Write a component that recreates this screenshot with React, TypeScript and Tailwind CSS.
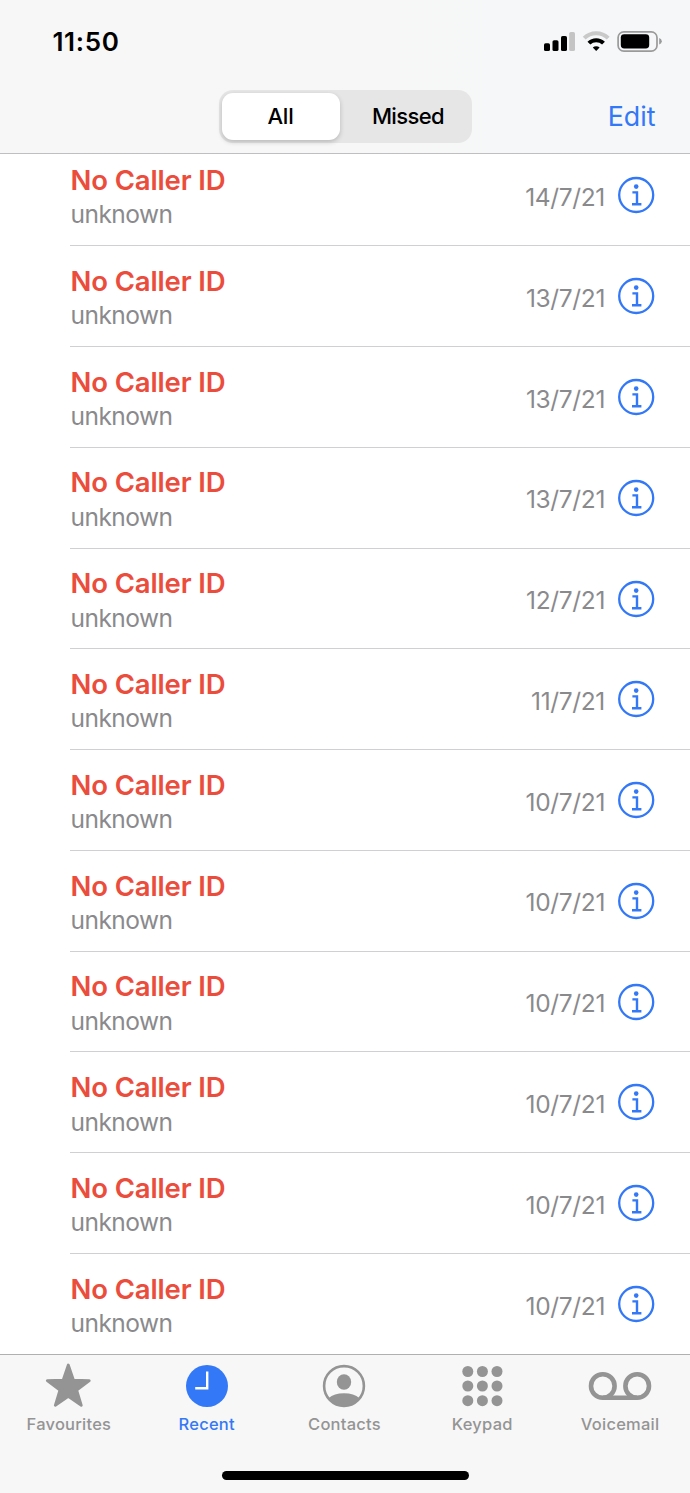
import type { ReactNode } from "react";

const calls = [
  "14/7/21", "13/7/21", "13/7/21", "13/7/21", "12/7/21", "11/7/21",
  "10/7/21", "10/7/21", "10/7/21", "10/7/21", "10/7/21", "10/7/21",
];

function StatusIcons() {
  return (
    <svg width="120" height="24" viewBox="0 0 120 24" className="block">
      <rect x="2" y="13.2" width="6" height="7.8" rx="1.6" fill="#000" />
      <rect x="10.5" y="10.2" width="6" height="10.8" rx="1.6" fill="#000" />
      <rect x="19" y="6" width="6" height="15" rx="1.6" fill="#000" />
      <rect x="27.2" y="2" width="5.8" height="19" rx="1.6" fill="#c4c4c4" />
      <path d="M42.2 8.2 A17 17 0 0 1 66.2 8.2" fill="none" stroke="#c9c9c9" strokeWidth="4" />
      <path d="M46.9 13.2 A10.3 10.3 0 0 1 61.5 13.2" fill="none" stroke="#000" strokeWidth="4" />
      <path d="M54.2 21 L50.8 17.6 A4.8 4.8 0 0 1 57.6 17.6 Z" fill="#000" />
      <rect x="76.1" y="1.8" width="38.9" height="19.4" rx="5.8" fill="none" stroke="#9a9a9a" strokeWidth="1.7" />
      <rect x="78.8" y="4.2" width="28.4" height="14.2" rx="3.4" fill="#000" />
      <path d="M117.2 8 Q119.8 9 119.8 11.3 Q119.8 13.6 117.2 14.6 Z" fill="#9a9a9a" />
    </svg>
  );
}

function InfoIcon() {
  return (
    <svg width="38" height="38" viewBox="0 0 38 38" className="block shrink-0">
      <circle cx="19.2" cy="19" r="17" fill="none" stroke="#3378f6" strokeWidth="2.3" />
      <circle cx="19.2" cy="10.6" r="2.3" fill="#3378f6" />
      <path d="M15.4 16.4H20V28.2M15 28.2H24.4" fill="none" stroke="#3378f6" strokeWidth="2.4" />
    </svg>
  );
}

function CallRow({ date }: { date: string }) {
  return (
    <li className="ml-[70px] flex h-[100.8px] shrink-0 border-b border-[#d0d0d2] pr-[35px] last:border-b-0">
      <div className="flex-1 pt-[17.7px] pl-[0.6px]">
        <div className="text-[27.5px] leading-[34px] font-semibold tracking-[-0.15px] text-[#eb4d3d]">No Caller ID</div>
        <div className="pt-[0.4px] text-[24.5px] leading-[34px] tracking-[-0.55px] text-[#8a8a8d]">unknown</div>
      </div>
      <div className="flex pt-[31px]">
        <span className="mr-[12px] pt-[3.6px] text-[24.5px] leading-[34px] tracking-[-0.35px] text-[#8a8a8d]">{date}</span>
        <InfoIcon />
      </div>
    </li>
  );
}

function Tab({ label, active, children }: { label: string; active?: boolean; children: ReactNode }) {
  return (
    <button
      className={
        "flex w-[138px] flex-col items-center pt-[7px] " + (active ? "text-[#3378f6]" : "text-[#949494]")
      }
    >
      <svg width="68" height="48" viewBox="0 0 68 48" className="block">
        {children}
      </svg>
      <span className="mt-[2.5px] text-[16.5px] leading-[22px] font-medium tracking-[0.24px]">{label}</span>
    </button>
  );
}

export default function App() {
  return (
    <div className="flex h-[1493px] w-[690px] flex-col overflow-hidden bg-white font-['Inter',sans-serif]">
      <header className="h-[154px] shrink-0 border-b border-[#bfbfc1] bg-linear-to-r from-[#f7f7f7] via-[#f7f7f7] to-[#f5f7f9]">
        <div className="flex h-[90px] justify-between pr-[28px] pl-[52.4px]">
          <span className="pt-[25px] text-[26px] leading-[34px] font-semibold tracking-[0.7px]">11:50</span>
          <div className="pt-[30px]">
            <StatusIcons />
          </div>
        </div>
        <div className="grid grid-cols-[1fr_253px_1fr] items-center">
          <span />
          <div className="flex h-[53px] rounded-[14px] bg-[#e6e6e6] p-[3px] text-[22px] font-medium">
            <button className="h-[47px] w-[118px] rounded-[11px] bg-white tracking-[-0.2px] shadow-[0_2px_5px_rgba(0,0,0,0.2)]">All</button>
            <button className="flex-1 pl-[8px] tracking-[-0.6px]">Missed</button>
          </div>
          <button className="pr-[34.5px] text-right text-[26.8px] text-[#3378f6]">Edit</button>
        </div>
      </header>

      <main className="h-[1200px] shrink-0 overflow-hidden">
        <ul className="-mt-[8.7px] flex flex-col">
          {calls.map((date, i) => (
            <CallRow key={i} date={date} />
          ))}
        </ul>
      </main>

      <footer className="flex flex-1 flex-col border-t border-[#b0b0b1] bg-[#f7f7f7]">
        <nav className="flex h-[116px] justify-between pr-px">
          <Tab label="Favourites">
            <path
              d="M33.3 3 L38.5 18.2 L54.3 18.6 L41.7 28.2 L46.3 43.3 L33.3 34.3 L20.3 43.3 L24.9 28.2 L12.3 18.6 L28.1 18.2 Z"
              fill="currentColor"
              stroke="currentColor"
              strokeWidth="2.8"
              strokeLinejoin="round"
            />
          </Tab>
          <Tab label="Recent" active>
            <circle cx="34" cy="24" r="21" fill="currentColor" />
            <path d="M34.2 9.5V26.2H22.2" fill="none" stroke="#fff" strokeWidth="2.4" />
          </Tab>
          <Tab label="Contacts">
            <circle cx="34" cy="24" r="19.9" fill="none" stroke="currentColor" strokeWidth="2.6" />
            <ellipse cx="34" cy="20" rx="7.2" ry="7.8" fill="currentColor" />
            <path d="M18.5 36.2 Q24 31.3 34 31.3 Q44 31.3 49.5 36.2 A19.9 19.9 0 0 1 18.5 36.2Z" fill="currentColor" />
          </Tab>
          <Tab label="Keypad">
            {[9.5, 24, 38.7].map((y) =>
              [19.8, 34.4, 49].map((x) => <circle key={`${x}-${y}`} cx={x} cy={y} r="5.5" fill="currentColor" />)
            )}
          </Tab>
          <Tab label="Voicemail">
            <g fill="none" stroke="currentColor" strokeWidth="4.6">
              <circle cx="16.8" cy="24" r="11.8" />
              <circle cx="51.2" cy="24" r="11.8" />
              <path d="M16.8 35.8H51.2" />
            </g>
          </Tab>
        </nav>
        <div className="mx-auto h-[9px] w-[247px] rounded-full bg-black" />
      </footer>
    </div>
  );
}
